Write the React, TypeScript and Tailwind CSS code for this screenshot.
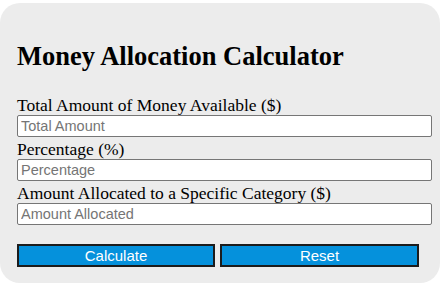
export default function App() {
  const fields = [
    { label: "Total Amount of Money Available ($)", placeholder: "Total Amount" },
    { label: "Percentage (%)", placeholder: "Percentage" },
    { label: "Amount Allocated to a Specific Category ($)", placeholder: "Amount Allocated" },
  ];

  return (
    <div className="min-h-screen bg-white pt-[3px]">
      <div className="w-[440px] rounded-[20px] bg-[#ececec] pl-[17px] pt-[39px] pb-[16px] font-['Liberation_Serif',serif] text-black">
        <h2 className="text-[26.5px] leading-[29px] font-bold">Money Allocation Calculator</h2>
        <div className="mt-[25px] flex flex-col">
          {fields.map((f) => (
            <div className="flex flex-col" key={f.label}>
              <label className="text-[17.5px] leading-[19px]">{f.label}</label>
              <input
                className="mb-[3px] h-[22px] w-[415px] rounded-[2px] border border-[#767676] bg-white px-[3px] font-['Liberation_Sans',sans-serif] text-[14.5px] placeholder:text-[#757575] outline-none"
                placeholder={f.placeholder}
                type="text"
              />
            </div>
          ))}
        </div>
        <div className="mt-[16px] flex gap-[5px]">
          <button className="h-[23px] w-[198px] border-2 border-[#1c1c1c] bg-[#0591dc] font-['Liberation_Sans',sans-serif] text-[15px] leading-none text-white">
            Calculate
          </button>
          <button className="h-[23px] w-[199px] border-2 border-[#1c1c1c] bg-[#0591dc] font-['Liberation_Sans',sans-serif] text-[15px] leading-none text-white">
            Reset
          </button>
        </div>
      </div>
    </div>
  );
}
